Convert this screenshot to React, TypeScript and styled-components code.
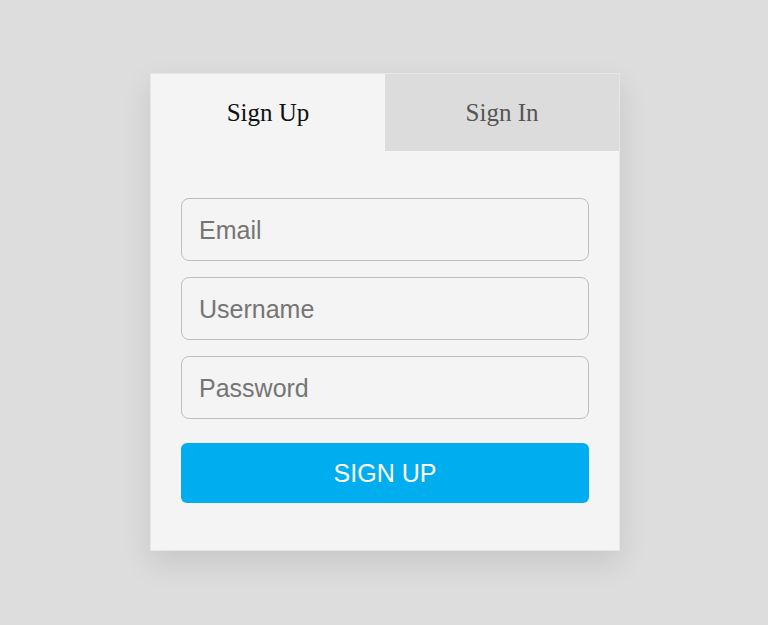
import React from "react";
import styled, { createGlobalStyle } from "styled-components";

const GlobalStyle = createGlobalStyle`
  html, body {
    margin: 0;
    padding: 0;
    background: #dddddd;
  }
  * { box-sizing: border-box; }
`;

const Page = styled.div`
  min-height: 100vh;
  display: flex;
  align-items: center;
  justify-content: center;
  padding-left: 2px;
  padding-bottom: 1px;
`;

const Card = styled.div`
  width: 470px;
  background: #f4f4f4;
  border: 1px solid #e6e6e6;
  box-shadow: 0 12px 28px rgba(0, 0, 0, 0.1);
`;

const Tabs = styled.div`
  display: grid;
  grid-template-columns: 1fr 1fr;
`;

const Tab = styled.div<{ $active?: boolean }>`
  height: 77px;
  display: flex;
  align-items: center;
  justify-content: center;
  font-family: "Liberation Serif", "Times New Roman", serif;
  font-size: 25px;
  color: ${(p) => (p.$active ? "#111111" : "#555555")};
  background: ${(p) => (p.$active ? "#f4f4f4" : "#dcdcdc")};
`;

const Form = styled.form`
  display: flex;
  flex-direction: column;
  gap: 16px;
  padding: 47px 30px 47px;
`;

const Input = styled.input`
  height: 63px;
  width: 100%;
  border: 1px solid #bdbdbd;
  border-radius: 8px;
  background: #f4f4f4;
  padding: 2px 17px 0;
  font-family: "Liberation Sans", Arial, sans-serif;
  font-size: 25px;
  color: #333;
  outline: none;
  &::placeholder {
    color: #757575;
  }
`;

const Button = styled.button`
  margin-top: 8px;
  height: 60px;
  width: 100%;
  border: none;
  border-radius: 6px;
  background: #00aeef;
  color: #ffffff;
  font-family: "Liberation Sans", Arial, sans-serif;
  font-size: 25px;
  text-transform: uppercase;
  cursor: pointer;
`;

export default function App() {
  return (
    <>
      <GlobalStyle />
      <Page>
        <Card>
          <Tabs>
            <Tab $active>Sign Up</Tab>
            <Tab>Sign In</Tab>
          </Tabs>
          <Form onSubmit={(e) => e.preventDefault()}>
            <Input type="email" placeholder="Email" />
            <Input type="text" placeholder="Username" />
            <Input type="password" placeholder="Password" />
            <Button type="submit">Sign Up</Button>
          </Form>
        </Card>
      </Page>
    </>
  );
}
